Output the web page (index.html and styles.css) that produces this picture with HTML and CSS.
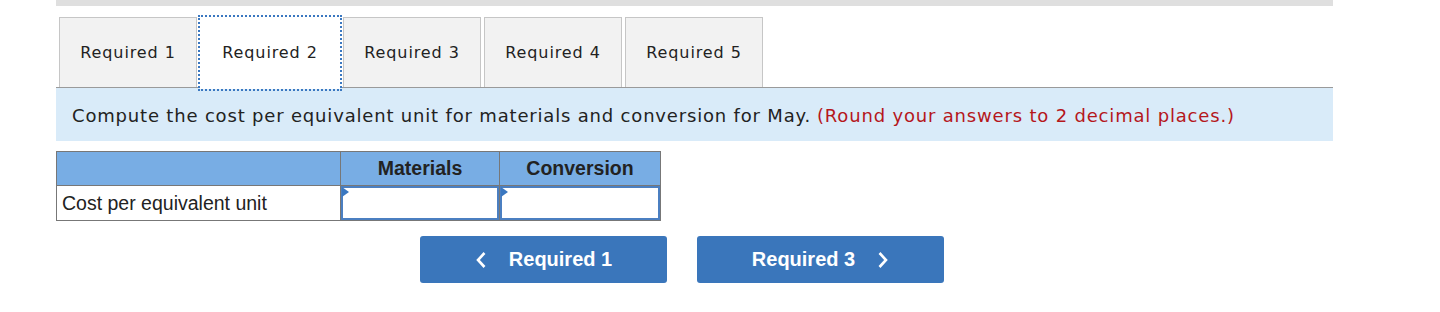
FILE: index.html
```html
<!DOCTYPE html>
<html lang="en">
<head>
    <meta charset="UTF-8">
    <title>Required 2</title>
    <link rel="stylesheet" href="styles.css">
</head>
<body>
    <div class="panel">
        <div class="top-bar"></div>
        <div class="tabs">
            <div class="tab">Required 1</div>
            <div class="tab active">Required 2</div>
            <div class="tab">Required 3</div>
            <div class="tab">Required 4</div>
            <div class="tab">Required 5</div>
        </div>
        <div class="instructions">
            Compute the cost per equivalent unit for materials and conversion for May. <span class="note">(Round your answers to 2 decimal places.)</span>
        </div>
        <table class="answer-table">
            <tr class="head-row">
                <th class="label-col"></th>
                <th>Materials</th>
                <th>Conversion</th>
            </tr>
            <tr class="entry-row">
                <td class="label-col">Cost per equivalent unit</td>
                <td class="input-cell"><div class="entry"></div></td>
                <td class="input-cell"><div class="entry"></div></td>
            </tr>
        </table>
        <div class="nav-buttons">
            <button class="nav-btn">
                <svg class="chev" width="12" height="18" viewBox="0 0 12 18"><path d="M9.5 2 L3 9 L9.5 16" fill="none" stroke="#fff" stroke-width="2.6"/></svg>
                Required 1
            </button>
            <button class="nav-btn">
                Required 3
                <svg class="chev right" width="12" height="18" viewBox="0 0 12 18"><path d="M2.5 2 L9 9 L2.5 16" fill="none" stroke="#fff" stroke-width="2.6"/></svg>
            </button>
        </div>
    </div>
</body>
</html>
```

FILE: styles.css
```css
body {
    margin: 0;
    padding: 0;
    background: #fff;
    font-family: "DejaVu Sans", Verdana, sans-serif;
    color: #222;
}

.panel {
    margin-left: 56px;
    width: 1277px;
}

.top-bar {
    height: 6px;
    background: #dfdfdf;
}

/* tab strip */
.tabs {
    display: flex;
    gap: 3px;
    margin-top: 11px;
    padding-left: 3px;
    border-bottom: 1px solid #9a9a9a;
    height: 70px;
}
.tab {
    box-sizing: border-box;
    width: 138px;
    height: 70px;
    border: 1px solid #c6c6c6;
    border-bottom: none;
    background: #f2f2f2;
    display: flex;
    align-items: center;
    justify-content: center;
    font-size: 16px;
    letter-spacing: 0.9px;
    color: #222;
}
.tab.active {
    width: 140px;
    background: #fff;
    border-color: #fff;
    outline: 2px dotted #3a77c0;
    height: 72px;
    padding-bottom: 2px;
    position: relative;
    z-index: 1;
}

.instructions {
    background: #d9ebf9;
    height: 53px;
    padding-left: 16px;
    padding-top: 2px;
    box-sizing: border-box;
    display: flex;
    align-items: center;
    font-size: 18px;
    letter-spacing: 0.82px;
    color: #222;
    white-space: nowrap;
}
.note {
    color: #b5171c;
    margin-left: 6px;
}

/* answer grid */
.answer-table {
    margin-top: 10px;
    border-collapse: collapse;
    font-family: "Liberation Sans", Arial, sans-serif;
}
.answer-table th,
.answer-table td {
    border: 1px solid #777;
    padding: 0;
}
.head-row th {
    height: 33px;
    background: #78ade4;
    font-size: 19.5px;
    font-weight: bold;
    color: #222;
    text-align: center;
}
.entry-row td {
    height: 34px;
}
.label-col {
    width: 283px;
}
.answer-table th:nth-child(2) { width: 158px; }
.answer-table th:nth-child(3) { width: 160px; }
td.label-col {
    font-size: 19.5px;
    color: #222;
    padding-left: 5px;
    width: 278px;
    background: #fff;
}
.input-cell {
    position: relative;
}
.entry {
    box-sizing: border-box;
    height: 34px;
    border: 2px solid #4b7fc1;
    background: #fff;
}
.input-cell::before {
    content: "";
    position: absolute;
    left: 1px;
    top: 1px;
    border-top: 5px solid transparent;
    border-bottom: 5px solid transparent;
    border-left: 7px solid #3a77c0;
}

/* prev / next */
.nav-buttons {
    display: flex;
    gap: 30px;
    margin-top: 15px;
    padding-left: 364px;
}
.nav-btn {
    width: 247px;
    height: 47px;
    border: none;
    border-radius: 3px;
    background: #3a76bb;
    color: #fff;
    font-family: "Liberation Sans", Arial, sans-serif;
    font-size: 20px;
    font-weight: bold;
    display: flex;
    align-items: center;
    justify-content: center;
    padding: 0;
}
.chev {
    margin-right: 22px;
}
.chev.right {
    margin-right: 0;
    margin-left: 22px;
}
```
